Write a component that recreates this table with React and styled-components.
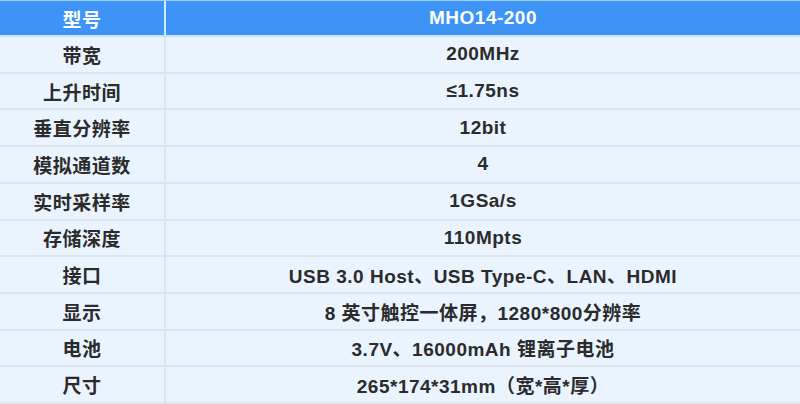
import { Fragment } from "react";
import styled, { createGlobalStyle } from "styled-components";

const GlobalStyle = createGlobalStyle`
  html, body {
    margin: 0;
    padding: 0;
    background: #eaf4fe;
  }
  body {
    font-family: "Liberation Sans", "Noto Sans CJK SC", sans-serif;
  }
`;

const Table = styled.div`
  width: 800px;
  height: 404px;
  display: grid;
  grid-template-columns: 166px 1fr;
  grid-template-rows: 36px repeat(10, 1fr);
  background: #eaf4fe;
  border-top: 1px solid #9fd2f7;
  box-sizing: border-box;
`;

const Cell = styled.div`
  display: flex;
  align-items: center;
  justify-content: center;
  font-size: 19px;
  font-weight: bold;
  letter-spacing: 0.5px;
  color: ${(p) => (p.head ? "#ffffff" : "#2b2b2b")};
  background: ${(p) => (p.head ? "#3d94f6" : "transparent")};
  border-bottom: 2px solid ${(p) => (p.head ? "#c9e3fb" : "#dde4ec")};
  border-right: ${(p) =>
    p.left ? `2px solid ${p.head ? "#d4e9fc" : "#dde4ec"}` : "none"};
  box-sizing: border-box;
  white-space: nowrap;
`;

const rows = [
  ["带宽", "200MHz"],
  ["上升时间", "≤1.75ns"],
  ["垂直分辨率", "12bit"],
  ["模拟通道数", "4"],
  ["实时采样率", "1GSa/s"],
  ["存储深度", "110Mpts"],
  ["接口", "USB 3.0 Host、USB Type-C、LAN、HDMI"],
  ["显示", "8 英寸触控一体屏，1280*800分辨率"],
  ["电池", "3.7V、16000mAh 锂离子电池"],
  ["尺寸", "265*174*31mm（宽*高*厚）"],
];

export default function App() {
  return (
    <>
      <GlobalStyle />
      <Table>
        <Cell head left>
          型号
        </Cell>
        <Cell head>MHO14-200</Cell>
        {rows.map(([k, v]) => (
          <Fragment key={k}>
            <Cell left>{k}</Cell>
            <Cell>{v}</Cell>
          </Fragment>
        ))}
      </Table>
    </>
  );
}
